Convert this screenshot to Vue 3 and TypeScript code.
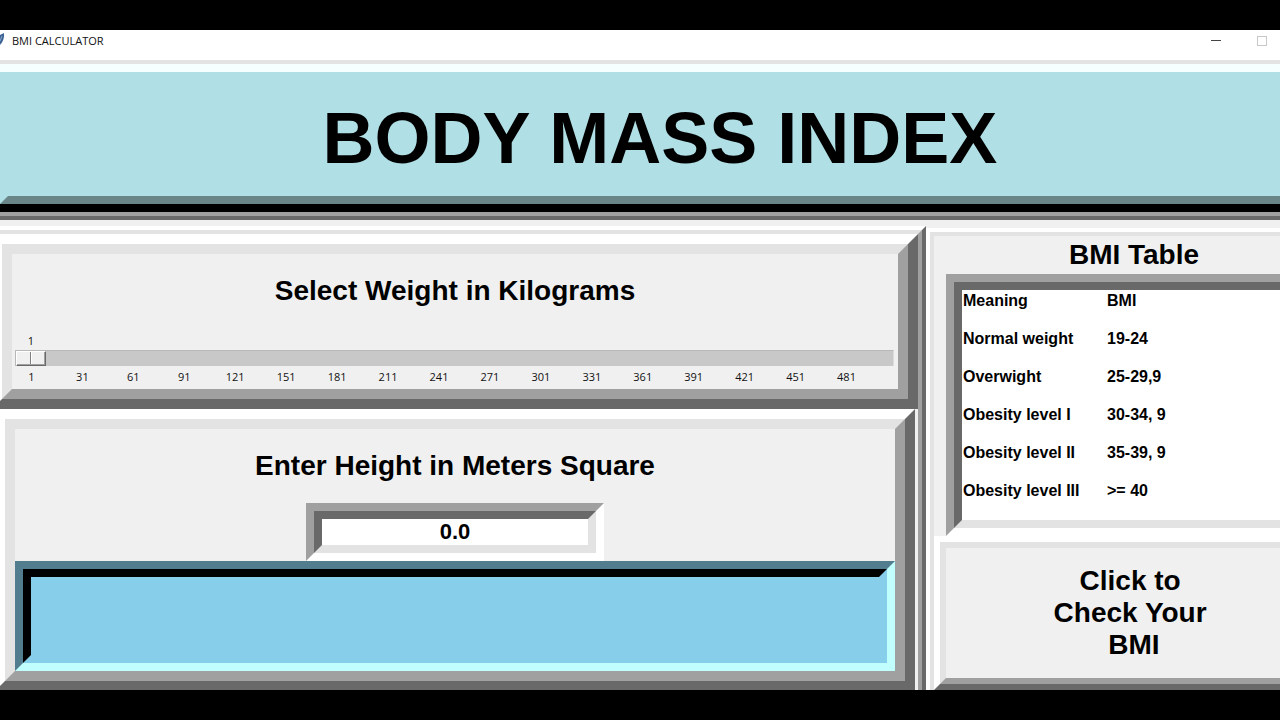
<script setup lang="ts">
import { ref } from 'vue'

interface Row {
  meaning: string
  range: string
}

const weight = ref<number>(1)
const height = ref<string>('0.0')
const result = ref<string>('')

const ticks: number[] = Array.from({ length: 17 }, (_, i) => 1 + i * 30)

const rows: Row[] = [
  { meaning: 'Normal weight', range: '19-24' },
  { meaning: 'Overwight', range: '25-29,9' },
  { meaning: 'Obesity level I', range: '30-34, 9' },
  { meaning: 'Obesity level II', range: '35-39, 9' },
  { meaning: 'Obesity level III', range: '>= 40' },
]

const checkLabel = 'Click to \nCheck Your \nBMI'

function checkBmi(): void {
  const metres = parseFloat(height.value)
  result.value = metres > 0 ? (weight.value / (metres * metres)).toFixed(1) : ''
}
</script>

<template>
  <div class="screen">
    <div class="window">
      <header class="titlebar">
        <svg class="feather" width="5" height="16" viewBox="0 0 5 16" aria-hidden="true">
          <path d="M0 2 L4 0 C4.5 5 3 9 0 12 Z" fill="#3c6396" />
          <path d="M0 8 L2 3" stroke="#8fa9c8" stroke-width="1" fill="none" />
        </svg>
        <span class="caption">BMI CALCULATOR</span>
        <button class="win-btn" type="button" aria-label="Minimize">
          <svg width="10" height="10" viewBox="0 0 10 10"><path d="M0 4.5H10" stroke="#444" /></svg>
        </button>
        <button class="win-btn" type="button" aria-label="Maximize" disabled>
          <svg width="10" height="10" viewBox="0 0 10 10">
            <rect x="0.5" y="0.5" width="9" height="9" fill="none" stroke="#c8c8c8" />
          </svg>
        </button>
      </header>

      <div class="banner-frame">
        <div class="banner-outer">
          <div class="banner-inner">
            <h1>BODY MASS INDEX</h1>
          </div>
        </div>
      </div>

      <main class="main">
        <div class="raised thin left">
          <div class="raised-in thin left-in">
            <section class="raised thick">
              <div class="raised-in thick weight">
                <label class="heading" for="weight">Select Weight in Kilograms</label>
                <output class="value" for="weight">{{ weight }}</output>
                <input id="weight" v-model.number="weight" class="scale" type="range" min="1" max="500" />
                <div class="ticks">
                  <span v-for="t in ticks" :key="t">{{ t }}</span>
                </div>
              </div>
            </section>

            <section class="raised thick height-panel">
              <div class="raised-in thick height">
                <label class="heading" for="height">Enter Height in Meters Square</label>
                <div class="sunken entry">
                  <input id="height" v-model="height" class="sunken-in entry-in" type="text" />
                </div>
                <div class="result">
                  <output class="result-in" for="weight height">{{ result }}</output>
                </div>
              </div>
            </section>
          </div>
        </div>

        <aside class="raised thin right">
          <div class="raised-in thin right-in">
            <h2 class="table-title">BMI Table</h2>
            <div class="sunken table-frame">
              <div class="sunken-in table-box">
                <table>
                  <thead>
                    <tr>
                      <th scope="col">Meaning</th>
                      <th scope="col">BMI</th>
                    </tr>
                  </thead>
                  <tbody>
                    <tr v-for="r in rows" :key="r.meaning">
                      <td>{{ r.meaning }}</td>
                      <td>{{ r.range }}</td>
                    </tr>
                  </tbody>
                </table>
              </div>
            </div>
            <button class="raised check" type="button" @click="checkBmi">
              <span class="raised-in check-in">{{ checkLabel }}</span>
            </button>
          </div>
        </aside>
      </main>
    </div>
  </div>
</template>

<style>
html,
body {
  margin: 0;
  background: #000;
}
</style>

<style scoped>
.screen {
  box-sizing: border-box;
  height: 100vh;
  min-height: 720px;
  padding: 30px 0;
  background: #000;
  color: #000;
  font-family: "Liberation Sans", Arial, sans-serif;
  font-weight: bold;
  overflow: hidden;
}

.window {
  display: flex;
  flex-direction: column;
  height: 100%;
  background: #f0f0f0;
  overflow: hidden;
}

.titlebar {
  display: flex;
  align-items: center;
  height: 22px;
  padding-bottom: 8px;
  background: #fff;
}

.feather {
  width: 5px;
  margin-right: 7px;
}

.caption {
  flex: 1;
  color: #111;
  font: 11px/16px "Open Sans", "Noto Sans", sans-serif;
}

.win-btn {
  display: flex;
  justify-content: center;
  width: 46px;
  padding: 0;
  border: 0;
  background: none;
}

.win-btn:last-child {
  margin-right: -5px;
}

/* Bevels: an outer ring and an inner ring, mitred at the corners */
.raised {
  box-sizing: border-box;
  border: solid;
  border-color: #fff #696969 #696969 #fff;
}

.raised-in {
  box-sizing: border-box;
  border: solid;
  border-color: #e3e3e3 #a0a0a0 #a0a0a0 #e3e3e3;
  background: #f0f0f0;
}

.thin {
  border-width: 4px;
}

.thick {
  border-width: 10px;
}

.sunken {
  box-sizing: border-box;
  border: 8px solid;
  border-color: #a0a0a0 #fff #fff #a0a0a0;
}

.sunken-in {
  box-sizing: border-box;
  border: 8px solid;
  border-color: #696969 #e3e3e3 #e3e3e3 #696969;
  background: #fff;
}

.banner-frame {
  margin: 0 -48px 6px -8px;
  border-top: 4px solid #e3e3e3;
  border-bottom: 4px solid #696969;
}

.banner-outer {
  border: 8px solid;
  border-color: #f6ffff #000 #000 #f6ffff;
  box-shadow: 0 4px #a0a0a0;
  margin-bottom: 4px;
}

.banner-inner {
  border: 8px solid;
  border-color: #b0e0e6 #6a8689 #6a8689 #b0e0e6;
  background: #b0e0e6;
}

h1 {
  margin: 0;
  font-size: 72px;
  line-height: 116px;
  text-align: center;
}

.main {
  display: flex;
  flex: 1;
  margin: 0 -62px -1px -16px;
}

.left {
  display: flex;
  flex: 1;
  border-bottom: 0;
}

.left-in {
  display: flex;
  flex: 1;
  flex-direction: column;
  border-bottom: 0;
}

.heading {
  font-size: 28px;
  line-height: 32px;
  text-align: center;
}

.weight {
  display: flex;
  flex-direction: column;
  padding: 21px 0 4px;
}

.value,
.ticks {
  color: #111;
  font: 11px/16px "Open Sans", "Noto Sans", sans-serif;
}

.value {
  width: 38px;
  margin-top: 26px;
  text-align: center;
}

.scale {
  appearance: none;
  box-sizing: border-box;
  height: 16px;
  margin: 1px 4px 3px 3px;
  border: 1px solid #b8b8b8;
  border-right-color: #dcdcdc;
  border-bottom: 0;
  background: #c8c8c8;
}

.scale::-webkit-slider-thumb {
  appearance: none;
  box-sizing: border-box;
  width: 30px;
  height: 15px;
  border: 1px solid;
  border-color: #fff #696969 #696969 #fff;
  background: linear-gradient(90deg, #f0f0f0 13px, #808080 13px 14px, #fff 14px 15px, #f0f0f0 15px);
  box-shadow: inset -1px -1px #a0a0a0;
}

.ticks {
  display: grid;
  grid-template-columns: repeat(17, 1fr);
  margin: 0 26px 0 -6px;
  text-align: center;
}

.height-panel {
  display: flex;
  flex: 1;
  margin: 0 3px;
}

.height {
  display: flex;
  flex: 1;
  flex-direction: column;
  align-items: center;
  padding-top: 21px;
}

.entry {
  width: 298px;
  margin-top: 21px;
}

.entry-in {
  display: block;
  width: 100%;
  height: 42px;
  padding: 0;
  border-radius: 0;
  color: #000;
  font: bold 22px/26px "Liberation Sans", Arial, sans-serif;
  text-align: center;
}

.result {
  box-sizing: border-box;
  display: flex;
  flex: 1;
  align-self: stretch;
  border: 8px solid;
  border-color: #517d8e #c1ffff #c1ffff #517d8e;
}

.result-in {
  display: flex;
  flex: 1;
  align-items: center;
  justify-content: center;
  border: 8px solid;
  border-color: #000 #87ceeb #87ceeb #000;
  background: #87ceeb;
  font-size: 28px;
}

.right {
  display: flex;
  width: 416px;
  margin-top: 2px;
  border-bottom: 0;
}

.right-in {
  display: flex;
  flex: 1;
  flex-direction: column;
  border-bottom: 0;
}

.table-title {
  margin: 0;
  font-size: 28px;
  line-height: 38px;
  text-align: center;
}

.table-frame {
  margin: 0 12px;
}

.table-box {
  padding: 0 1px 2px;
}

table {
  border-collapse: collapse;
  font-size: 16px;
  line-height: 22px;
  text-align: left;
}

th,
td {
  padding: 0 0 16px;
  font-weight: bold;
}

th:first-child,
td:first-child {
  width: 144px;
}

.check {
  display: flex;
  flex: 1;
  margin-bottom: 1px;
  padding: 0;
  border-width: 6px;
  border-radius: 0;
  background: #f0f0f0;
  color: #000;
  font: bold 28px/32px "Liberation Sans", Arial, sans-serif;
}

/* Trailing spaces in the label count towards each line's width */
.check-in {
  display: flex;
  flex: 1;
  align-self: stretch;
  align-items: center;
  justify-content: center;
  border-width: 6px;
  white-space: pre;
}
</style>
